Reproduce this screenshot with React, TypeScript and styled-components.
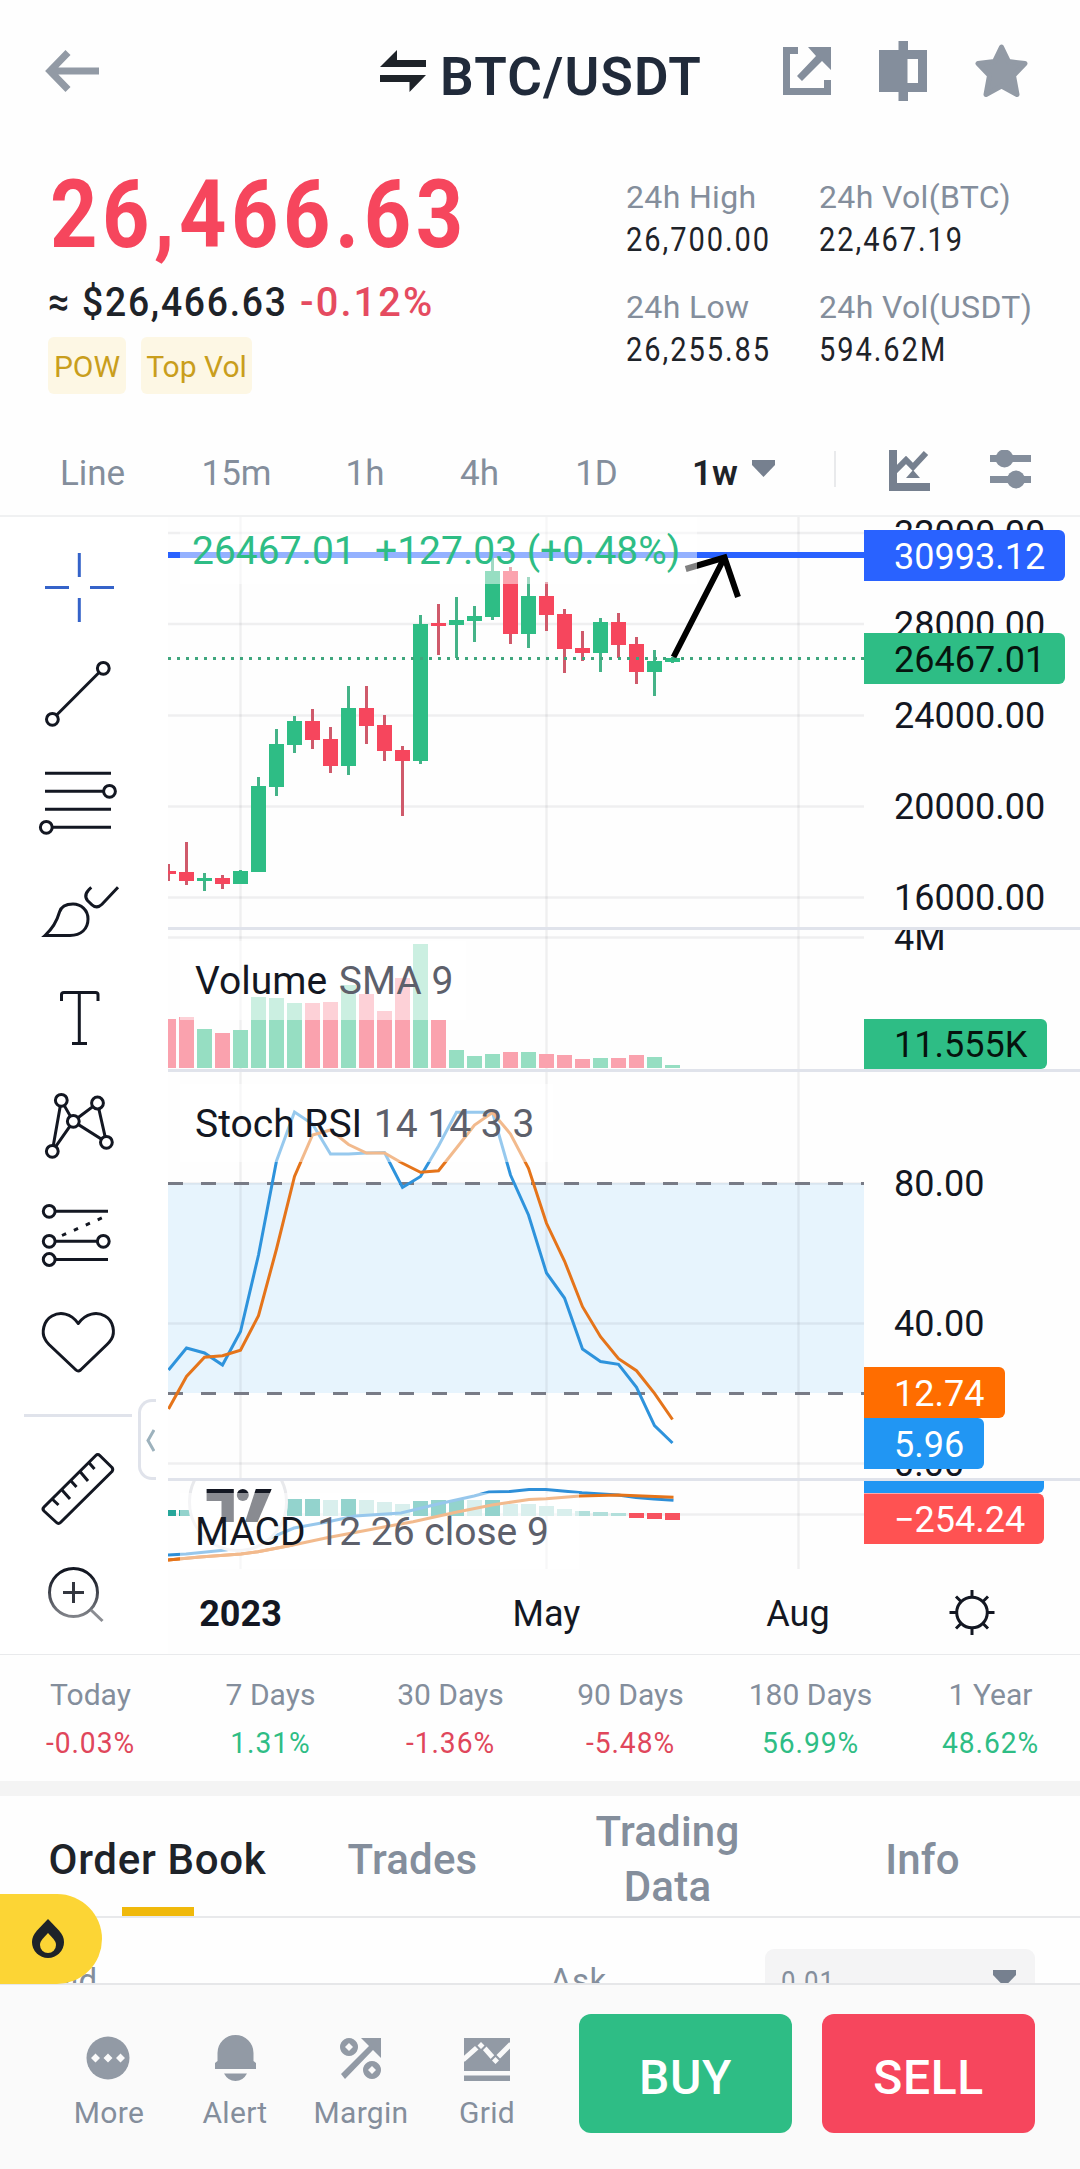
import React from "react";
import styled, { createGlobalStyle, css } from "styled-components";

const GREEN = "#2ebd85";
const RED = "#f6465d";
const GREY = "#848e9c";
const ICON = "#929aa5";
const INK = "#1e2329";
const CHART_INK = "#131722";

const GlobalStyle = createGlobalStyle`
  * { box-sizing: border-box; }
  body { margin: 0; background: #fff; }
`;

const Screen = styled.div`
  width: 1080px;
  height: 2169px;
  overflow: hidden;
  display: flex;
  flex-direction: column;
  background: #fefefe;
  color: ${INK};
  font-family: Roboto, "Liberation Sans", sans-serif;
  white-space: nowrap;
`;

/* ---------- header ---------- */

const Header = styled.header`
  display: flex;
  align-items: flex-start;
  height: 160px;
  padding: 41px 50px 0 45px;
  flex: none;
`;

const BackIcon = styled.svg`
  width: 54px;
  height: 42px;
  margin-top: 9px;
`;

const PairTitle = styled.h1`
  display: flex;
  align-items: flex-start;
  gap: 14px;
  width: 403px;
  margin: 0 0 0 281px;
  font-size: 53px;
  line-height: 62px;
  font-weight: 600;
  letter-spacing: 1.2px;
  color: #202a3a;

  svg {
    width: 46px;
    height: 42px;
    margin-top: 9px;
  }

  span {
    margin-top: 5px;
  }
`;

const HeaderIcons = styled.div`
  display: flex;
  gap: 48px;
  align-items: flex-start;

  svg {
    display: block;
    flex: none;
  }
`;

/* ---------- ticker ---------- */

const Ticker = styled.section`
  display: flex;
  height: 264px;
  flex: none;
`;

const PriceBlock = styled.div`
  width: 580px;
  padding: 9px 0 0 48px;
`;

const Din = styled.span<{ size: number; gap: number; weight?: number; color?: string; squeeze?: number }>`
  display: inline-block;
  font-size: ${(p) => p.size}px;
  font-weight: ${(p) => p.weight ?? 400};
  letter-spacing: ${(p) => p.gap}px;
  color: ${(p) => p.color ?? INK};
  transform: scaleX(${(p) => p.squeeze ?? 0.88});
  transform-origin: left center;
`;

const LastPrice = styled.div`
  height: 92px;
  padding-left: 2px;
  line-height: 92px;
`;

const FiatRow = styled.div`
  display: flex;
  height: 58px;
  margin-top: 12px;
  line-height: 58px;
`;

const FiatPrice = styled.div`
  width: 252px;
`;

const TagRow = styled.div`
  display: flex;
  gap: 15px;
  margin-top: 6px;
`;

const Tag = styled.span<{ w: number }>`
  width: ${(p) => p.w}px;
  height: 57px;
  border-radius: 6px;
  background: #fdf7e4;
  color: #c99e1c;
  font-size: 30px;
  line-height: 60px;
  text-align: center;
`;

const Stats = styled.div`
  display: grid;
  grid-template-columns: 193px 1fr;
  grid-template-rows: 110px 110px;
  flex: 1;
  padding: 16px 0 0 46px;
`;

const StatLabel = styled.div`
  height: 42px;
  line-height: 42px;
  font-size: 32px;
  letter-spacing: 0.35px;
  color: ${GREY};
`;

const StatValue = styled.div`
  height: 43px;
  line-height: 43px;
`;

/* ---------- interval bar ---------- */

const IntervalBar = styled.nav`
  display: grid;
  grid-template-columns: 145px 143px 114px 115px 119px 180px 53px 101px 1fr;
  height: 93px;
  flex: none;
  padding: 26px 0 0 20px;
  border-bottom: 2px solid #f0f1f2;
`;

const Interval = styled.div<{ active?: boolean }>`
  display: flex;
  gap: 14px;
  align-items: flex-start;
  justify-content: ${(p) => (p.active ? "flex-start" : "center")};
  padding-left: ${(p) => (p.active ? 36 : 0)}px;
  height: 46px;
  line-height: 47px;
  font-size: 35px;
  font-weight: ${(p) => (p.active ? 600 : 400)};
  color: ${(p) => (p.active ? INK : GREY)};

  svg {
    margin-top: 10px;
  }
`;

const BarRule = styled.div`
  width: 2px;
  height: 36px;
  background: #e9eaec;
  margin: 1px 0 0 -2px;
`;

/* ---------- chart ---------- */

const ChartSection = styled.section`
  display: flex;
  height: 1137px;
  flex: none;
`;

const Toolbar = styled.aside`
  position: relative;
  width: 168px;
  padding: 16px 0 0 25px;
  background: #fff;
`;

const ToolIcon = styled.svg`
  display: block;
  width: 108px;
  height: 108px;
  overflow: visible;
`;

const ToolRule = styled.div`
  width: 108px;
  height: 3px;
  margin: 17px 0 18px -1px;
  background: #e0e3eb;
`;

const CollapseHandle = styled.div`
  position: absolute;
  left: 138px;
  top: 882px;
  width: 18px;
  height: 81px;
  border: 3px solid #e0e3eb;
  border-right: 0;
  border-radius: 14px 0 0 14px;
  background: #fff;
  overflow: hidden;

  svg {
    display: block;
    margin: 27px 0 0 2px;
  }
`;

const ChartArea = styled.div`
  position: relative;
  width: 912px;
`;

const Canvas = styled.svg`
  display: block;
  width: 912px;
  height: 1137px;
`;

const Legend = styled.div<{ top: number; w: number; h: number; pad?: number; tone?: string }>`
  position: absolute;
  left: 12px;
  top: ${(p) => p.top}px;
  width: ${(p) => p.w}px;
  height: ${(p) => p.h}px;
  padding-left: ${(p) => p.pad ?? 15}px;
  background: rgba(255, 255, 255, 0.5);
  font-size: 39px;
  line-height: ${(p) => p.h + 2}px;
  white-space: pre;
  color: ${(p) => p.tone ?? CHART_INK};
`;

const LegendArgs = styled.span`
  margin-left: 2px;
  color: #5d606b;
`;

/* ---------- performance ---------- */

const Performance = styled.section`
  display: grid;
  grid-template-columns: repeat(6, 180px);
  height: 142px;
  flex: none;
  padding-top: 20px;
  border-top: 1px solid #e9eaec;
  border-bottom: 15px solid #f4f4f4;
  text-align: center;
`;

const PerfCell = styled.div<{ up?: boolean }>`
  height: 100px;
  padding-left: 1px;
  font-size: 30px;
  line-height: 40px;
  color: ${GREY};

  strong {
    display: block;
    margin-top: 8px;
    font-size: 30px;
    font-weight: 400;
    letter-spacing: 1px;
    transform: scaleX(0.94);
    color: ${(p) => (p.up ? GREEN : "#e0465b")};
  }
`;

/* ---------- order book ---------- */

const Tabs = styled.nav`
  display: grid;
  grid-template-columns: repeat(4, 255px);
  height: 122px;
  flex: none;
  padding: 0 30px;
  border-bottom: 2px solid #e8e9eb;
`;

const Tab = styled.div<{ active?: boolean }>`
  position: relative;
  display: flex;
  align-items: center;
  justify-content: center;
  padding-top: 6px;
  text-align: center;
  font-size: 42px;
  line-height: 55px;
  font-weight: 500;
  letter-spacing: ${(p) => (p.active ? 0.7 : 0.2)}px;
  white-space: pre-line;
  color: ${(p) => (p.active ? INK : GREY)};

  ${(p) =>
    p.active &&
    css`
      &::after {
        content: "";
        position: absolute;
        left: 92px;
        bottom: 0;
        width: 72px;
        height: 9px;
        background: #f0b90b;
      }
    `}
`;

const BookHead = styled.div`
  display: flex;
  align-items: flex-start;
  height: 65px;
  flex: none;
  overflow: hidden;
  padding: 32px 45px 0 50px;
  font-size: 33px;
  color: ${GREY};
  line-height: 61px;
`;

const BidLabel = styled.span`
  width: 500px;
`;

const AskLabel = styled.span`
  width: 215px;
  letter-spacing: 0.5px;
`;

const StepSelect = styled.div`
  display: flex;
  justify-content: space-between;
  width: 270px;
  height: 60px;
  margin-top: -1px;
  padding: 0 19px 0 16px;
  border-radius: 9px;
  background: #f4f4f5;
  line-height: 65px;

  svg {
    margin-top: 21px;
  }
`;

const Promo = styled.div`
  position: absolute;
  left: 0;
  top: 1894px;
  width: 102px;
  height: 90px;
  padding: 25px 0 0 32px;
  border-radius: 0 45px 45px 0;
  background: #fcd535;
`;

/* ---------- bottom bar ---------- */

const BottomBar = styled.footer`
  display: flex;
  flex: 1;
  padding: 29px 45px 0 46px;
  border-top: 2px solid #e6e7e9;
  background: #fafafa;
`;

const Action = styled.div`
  display: flex;
  flex-direction: column;
  align-items: center;
  width: 126px;
  padding-top: 21px;
  font-size: 30px;
  line-height: 40px;
  letter-spacing: 0.3px;
  color: ${GREY};

  svg {
    display: block;
    margin-bottom: 12px;
  }
`;

const TradeButton = styled.button<{ tone: string }>`
  width: 213px;
  height: 119px;
  margin-left: 29px;
  padding: 0;
  border: 0;
  border-radius: 12px;
  background: ${(p) => p.tone};
  color: #fff;
  font: 500 48px / 128px Roboto, sans-serif;
  letter-spacing: 0.6px;

  & + & {
    margin-left: 30px;
  }
`;

/* ---------- data ---------- */

// up flag, wick high, wick low, body top, body bottom (pixels on the canvas)
const candles: [number, number, number, number, number][] = [
  [0, 864, 881, 871, 874],
  [0, 842, 885, 872, 881],
  [1, 873, 891, 878, 881],
  [0, 875, 889, 878, 884],
  [1, 870, 884, 871, 884],
  [1, 777, 872, 786, 872],
  [1, 729, 796, 744, 787],
  [1, 716, 753, 721, 745],
  [0, 709, 749, 721, 740],
  [0, 727, 773, 739, 766],
  [1, 686, 775, 708, 766],
  [0, 686, 744, 708, 726],
  [0, 715, 761, 725, 751],
  [0, 746, 816, 750, 761],
  [1, 615, 764, 624, 761],
  [0, 604, 655, 623, 626],
  [1, 597, 658, 620, 625],
  [1, 606, 642, 616, 621],
  [1, 558, 620, 571, 617],
  [0, 567, 644, 571, 634],
  [1, 577, 648, 596, 634],
  [0, 582, 631, 596, 615],
  [0, 609, 673, 614, 649],
  [0, 631, 661, 648, 653],
  [1, 618, 672, 622, 653],
  [0, 613, 658, 622, 645],
  [0, 637, 684, 644, 672],
  [1, 650, 696, 661, 672],
  [1, 657, 663, 658, 662],
];

const volumeTops = [
  1019, 1017, 1029, 1033, 1030, 997, 998, 1003, 1003, 1002, 985, 994, 1011, 978, 944, 1020, 1050, 1056, 1054, 1052,
  1052, 1054, 1055, 1059, 1058, 1058, 1055, 1057, 1065,
];

const kLine = [
  1370, 1348, 1353, 1365, 1331.5, 1255, 1161, 1112, 1124, 1154, 1154, 1153, 1152.5, 1187.5, 1176.5, 1146, 1112.3,
  1112.3, 1112.3, 1175, 1215, 1273, 1298, 1349, 1361.5, 1364.3, 1387.3, 1425.7, 1443,
];

const dLine = [
  1409, 1376.5, 1357.3, 1355.7, 1350.3, 1315.7, 1249, 1176.5, 1135, 1130, 1144.5, 1153, 1153, 1163.3, 1172.3, 1170.7,
  1148, 1125, 1112.5, 1134, 1168.3, 1223.3, 1261, 1306.7, 1336.7, 1358.7, 1370.7, 1393.3, 1419.5,
];

const DARK = "#26a69a";
const PALE = "#b2dfdb";
const DROP = "#f7525f";
const macdBars: [number, number, number, string][] = [
  [0, 1510, 1516, DARK],
  [1, 1510, 1516, DARK],
  [7, 1499, 1516, DARK],
  [8, 1499, 1516, DARK],
  [9, 1500, 1516, PALE],
  [10, 1499, 1516, DARK],
  [11, 1500, 1516, PALE],
  [12, 1502, 1516, PALE],
  [13, 1504, 1516, PALE],
  [14, 1501, 1516, DARK],
  [15, 1500, 1516, DARK],
  [16, 1500, 1516, DARK],
  [17, 1500, 1516, PALE],
  [18, 1500, 1516, DARK],
  [19, 1504, 1516, PALE],
  [20, 1504, 1516, PALE],
  [21, 1506, 1516, PALE],
  [22, 1509, 1516, PALE],
  [23, 1511, 1516, PALE],
  [24, 1512, 1516, PALE],
  [25, 1513, 1516, PALE],
  [26, 1513, 1518, DROP],
  [27, 1513, 1519, DROP],
  [28, 1513, 1520, DROP],
];

const barX = (i: number) => 168.5 + 18 * i;
const toPoints = (ys: number[]) => ys.map((y, i) => `${barX(i)},${y}`).join(" ");

const performance: [string, string][] = [
  ["Today", "-0.03%"],
  ["7 Days", "1.31%"],
  ["30 Days", "-1.36%"],
  ["90 Days", "-5.48%"],
  ["180 Days", "56.99%"],
  ["1 Year", "48.62%"],
];

const stats: [string, string][] = [
  ["24h High", "26,700.00"],
  ["24h Vol(BTC)", "22,467.19"],
  ["24h Low", "26,255.85"],
  ["24h Vol(USDT)", "594.62M"],
];

/* ---------- chart pieces ---------- */

function AxisText({ y, children, fill = CHART_INK }: { y: number; children: string; fill?: string }) {
  return (
    <text x={894} y={y + 12.5} fontSize={36} fill={fill}>
      {children}
    </text>
  );
}

function AxisTag(p: { top: number; bottom: number; right: number; fill: string; ink?: string; label?: string }) {
  const { top, bottom, right, fill } = p;
  return (
    <g>
      <path fill={fill} d={`M864 ${top}H${right - 6}a6 6 0 0 1 6 6V${bottom - 6}a6 6 0 0 1 -6 6H864Z`} />
      {p.label && (
        <AxisText y={(top + bottom) / 2 + 0.5} fill={p.ink ?? "#fff"}>
          {p.label}
        </AxisText>
      )}
    </g>
  );
}

function ChartCanvas() {
  return (
    <Canvas viewBox="168 517 912 1137" fontFamily="Roboto, 'Liberation Sans', sans-serif">
      <defs>
        <clipPath id="plot">
          <rect x="168" y="517" width="696" height="1052" />
        </clipPath>
        <clipPath id="pricePane">
          <rect x="864" y="517" width="216" height="410" />
        </clipPath>
        <clipPath id="volumePane">
          <rect x="864" y="930" width="216" height="139" />
        </clipPath>
        <clipPath id="macdPane">
          <rect x="168" y="1481" width="912" height="88" />
        </clipPath>
      </defs>

      <g clipPath="url(#plot)">
        <rect x="168" y="1183" width="696" height="210" fill="#e7f4fd" />
        <g stroke="#2a2e39" strokeOpacity="0.07" strokeWidth="2.4">
          {[533, 624, 715.5, 806.5, 897.5, 937.5, 1183.5, 1323.5, 1463.5, 1514.5].map((y) => (
            <line key={y} x1="168" x2="864" y1={y} y2={y} />
          ))}
          {[240.5, 546.5, 798.5].map((x) => (
            <line key={x} x1={x} x2={x} y1="517" y2="1569" />
          ))}
        </g>

        {volumeTops.map((top, i) => (
          <rect
            key={i}
            x={barX(i) - 7.5}
            y={top}
            width="15"
            height={1068 - top}
            fill={candles[i][0] ? "#96dec2" : "#faa2ae"}
          />
        ))}

        {candles.map(([up, high, low, top, bottom], i) => (
          <g key={i} fill={up ? GREEN : RED}>
            <rect x={barX(i) - 1.5} y={high} width="3" height={low - high} fill={up ? "#45b388" : "#cf5a6b"} />
            <rect x={barX(i) - 7.5} y={top} width="15" height={bottom - top} />
          </g>
        ))}
        <line x1="168" x2="864" y1="658.5" y2="658.5" stroke="#3fa67d" strokeWidth="3" strokeDasharray="3 6" />
        <line x1="168" x2="864" y1="555" y2="555" stroke="#2962ff" strokeWidth="6" />
        <path d="M673.6 657L724.5 557.5M685.7 569L724.5 557.5L738 597" fill="none" stroke="#000" strokeWidth="6" />

        <g stroke="#787b86" strokeWidth="3" strokeDasharray="15 18">
          <line x1="168" x2="864" y1="1183.5" y2="1183.5" />
          <line x1="168" x2="864" y1="1393.5" y2="1393.5" />
        </g>
        <g fill="none" strokeWidth="3">
          <polyline points={toPoints(kLine)} stroke="#2e93dc" />
          <polyline points={toPoints(dLine)} stroke="#e5741a" />
        </g>
      </g>

      <g clipPath="url(#macdPane)">
        {macdBars.map(([i, top, bottom, fill]) => (
          <rect key={i} x={barX(i) - 7.5} y={top} width="15" height={bottom - top} fill={fill} />
        ))}
        <g fill="none" strokeWidth="3">
          <path
            stroke="#2e8fd8"
            d="M168 1555L186 1554L226 1550L250 1545L275 1536L294 1528L327 1522L355 1516L401 1513L438 1504L474 1496L489 1492L510 1491.5L529 1489.5L546 1489.5L582 1492.7L618 1495L636 1497.5L654 1499L673.5 1500.3"
          />
          <path
            stroke="#e5741a"
            d="M168 1560L200 1557L241 1554L258 1551.7L293 1545L327 1537.7L384 1527L413 1521.7L456 1512.3L492 1505L529 1499.5L546 1498.7L580 1496L618 1495L673.5 1497.3"
          />
        </g>
        <circle cx="238" cy="1502" r="48.5" fill="#fff" stroke="#e8e9ec" strokeWidth="3" />
        <g fill={CHART_INK}>
          <path d="M206.6 1489H233.8V1522H221.5V1501H206.6Z" />
          <circle cx="242.8" cy="1495" r="6" />
          <path d="M255.8 1489H271.7L257.6 1522H245Z" />
        </g>
        <path d="M168 1560L200 1557L241 1554L258 1551.7L293 1545" fill="none" stroke="#e5741a" strokeWidth="3" />
      </g>

      <g clipPath="url(#pricePane)">
        <AxisText y={533}>32000.00</AxisText>
        <AxisText y={624}>28000.00</AxisText>
        <AxisText y={715.5}>24000.00</AxisText>
        <AxisText y={806.5}>20000.00</AxisText>
        <AxisText y={897.5}>16000.00</AxisText>
        <AxisTag top={530} bottom={581} right={1065} fill="#2962ff" label="30993.12" />
        <AxisTag top={633} bottom={684} right={1065} fill={GREEN} ink="#06140e" label="26467.01" />
      </g>
      <g clipPath="url(#volumePane)">
        <AxisText y={937.5}>4M</AxisText>
        <AxisTag top={1019} bottom={1069} right={1047} fill={GREEN} ink="#06140e" label="11.555K" />
      </g>
      <AxisText y={1183.5}>80.00</AxisText>
      <AxisText y={1323.5}>40.00</AxisText>
      <AxisText y={1463.5}>0.00</AxisText>
      <AxisTag top={1367} bottom={1418} right={1005} fill="#ff6d00" label="12.74" />
      <AxisTag top={1418} bottom={1469} right={984} fill="#2196f3" label="5.96" />
      <g clipPath="url(#macdPane)">
        <AxisTag top={1443} bottom={1493} right={1044} fill="#2196f3" />
        <AxisTag top={1493.5} bottom={1544} right={1044} fill="#ff5252" label="−254.24" />
      </g>

      <g fill="#e0e3eb">
        <rect x="168" y="927" width="912" height="3" />
        <rect x="168" y="1069" width="912" height="3" />
        <rect x="168" y="1478" width="912" height="3" />
      </g>

      <g fontSize="36" fill={CHART_INK} textAnchor="middle">
        <text x="240.5" y="1626" fontWeight="700">
          2023
        </text>
        <text x="546.5" y="1626">
          May
        </text>
        <text x="798" y="1626">
          Aug
        </text>
      </g>
      <g stroke={CHART_INK} strokeWidth="3" fill="none">
        <circle cx="972" cy="1612.5" r="15.3" />
        <path d="M972 1597V1590M972 1628V1635M956.5 1612.5H949.5M987.5 1612.5H994.5M961 1601.5L956 1596.5M983 1601.5L988 1596.5M961 1623.5L956 1628.5M983 1623.5L988 1628.5" />
      </g>
    </Canvas>
  );
}

/* ---------- drawing tools ---------- */

const dot = (cx: number, cy: number) => <circle key={`${cx}-${cy}`} cx={cx} cy={cy} r="5.9" fill="#fff" />;

const tools: React.ReactNode[] = [
  <path stroke="#3563c9" d="M45 587.5H69M90 587.5H114M79.3 553V577M79.3 598V622" />,
  <>
    <path d="M52.4 719.3L103.3 668.3" />
    {dot(52.4, 719.3)}
    {dot(103.3, 668.3)}
  </>,
  <>
    <path d="M45 773.3H111M45 791.3H109M45 809.3H111M46 827.3H111" />
    {dot(109.5, 791.3)}
    {dot(46.3, 827.3)}
  </>,
  <>
    <path d="M45 935.5H70C81 935.5 88 929 88 919C88 910 81 904 73 904C66 904 61 907 59.5 912C57 921 51 930 45 935.5Z" />
    <path d="M91.3 887.3C85.5 892 84 896 87.5 900.5L92 904.8C95.5 907.8 99 907.3 102 904.3L118 887.3" />
  </>,
  <path d="M61.5 1001V994.5Q61.5 992.5 64 992.5H95.5Q98 992.5 98 994.5V1001M79.3 992.5V1043.5M72 1043.5H87" />,
  <>
    <path d="M61.3 1100.3L52.3 1151.3L73.3 1121.3ZM73.3 1121.3L97.5 1103L106.4 1142.3Z" />
    {dot(61.3, 1100.3)}
    {dot(97.5, 1103)}
    {dot(73.3, 1121.3)}
    {dot(106.4, 1142.3)}
    {dot(52.3, 1151.3)}
  </>,
  <>
    <path d="M49 1211.3H108M49 1241.3H103M49 1259.5H108" />
    <path d="M62 1235.5L104 1217" strokeDasharray="4.5 8.5" />
    {dot(49.2, 1211.3)}
    {dot(49.2, 1241.3)}
    {dot(103.3, 1241.3)}
    {dot(49.2, 1259.5)}
  </>,
  <path
    strokeLinejoin="round"
    d="M78.2 1323.5C71 1313 60 1311.5 52 1316C43 1321 41.5 1333 45 1339Q46 1341.5 49 1344.5L76 1370Q78.2 1372 80.5 1370L107 1344.5Q110 1341.5 111.5 1339C115 1333 114 1321 105 1316C97 1311.5 86 1313 78.2 1323.5Z"
  />,
];

function ToolColumn() {
  return (
    <Toolbar>
      {tools.map((shape, i) => (
        <ToolIcon
          key={i}
          viewBox={`25 ${533 + 108 * i} 108 108`}
          fill="none"
          stroke={CHART_INK}
          strokeWidth="3"
        >
          {shape}
        </ToolIcon>
      ))}
      <ToolRule />
      <ToolIcon viewBox="25 1435 108 108" fill="none" stroke={CHART_INK} strokeWidth="3" strokeLinejoin="round">
        <path d="M95.8 1455.5Q97.8 1453.5 99.8 1455.5L112 1467.5Q113.5 1469.5 112 1471.5L60.5 1522.5Q58.5 1524.5 56.5 1522.5L44 1511Q42 1509 44 1507Z" />
        <path d="M88.8 1462.5L94.5 1469M80 1471.5L88 1481M70.6 1480.5L76.5 1487M62 1490L70 1499M52.7 1499.5L58.5 1505" />
      </ToolIcon>
      <ToolIcon viewBox="25 1543 108 108" fill="none" strokeWidth="3">
        <defs>
          <linearGradient id="fade" gradientUnits="userSpaceOnUse" x1="0" x2="0" y1="1575" y2="1625">
            <stop offset="0" stopColor={CHART_INK} />
            <stop offset="1" stopColor="#97999e" />
          </linearGradient>
        </defs>
        <circle cx="73.5" cy="1592.5" r="24" stroke="url(#fade)" />
        <path d="M63 1592.5H84M73.5 1582V1603" stroke="#33363f" />
        <path d="M91 1610L102.5 1621" stroke="#8b8d93" />
      </ToolIcon>
      <CollapseHandle>
        <svg width="12" height="23" viewBox="0 0 12 23" fill="none" stroke="#9db2bd" strokeWidth="3">
          <path d="M11 1L5 11.5L11 22" />
        </svg>
      </CollapseHandle>
    </Toolbar>
  );
}

const Caret = () => (
  <svg width="23" height="17" viewBox="0 0 23 17" fill="#76808f">
    <path d="M0 0H23V5L11.5 17L0 5Z" />
  </svg>
);

/* ---------- page ---------- */

export default function App() {
  return (
    <Screen>
      <GlobalStyle />
      <Header>
        <BackIcon viewBox="0 0 54 42" fill="none" stroke={ICON} strokeWidth="7">
          <path d="M54 21H6M23 2.5L5 21L23 39.5" />
        </BackIcon>
        <PairTitle>
          <svg viewBox="0 0 46 42" fill={INK}>
            <path d="M17 0V10H46V17H0ZM0 25H46L29.5 42V32H0Z" />
          </svg>
          <span>BTC/USDT</span>
        </PairTitle>
        <HeaderIcons>
          <svg width="48" height="60" viewBox="0 0 48 60" fill={GREY}>
            <path d="M0 6H15V13H7V47H41V39H48V54H0Z" />
            <path d="M25 6H48V29L39 20L19 40L14 35L33 15Z" />
          </svg>
          <svg width="48" height="60" viewBox="0 0 48 60" fill={GREY}>
            <path fillRule="evenodd" d="M19.5 0H29V9H48V51H29V60H19.5V51H0V9H19.5ZM28.5 18V42H39V18Z" />
          </svg>
          <svg
            width="54"
            height="60"
            viewBox="0 0 54 60"
            fill={ICON}
            stroke={ICON}
            strokeWidth="5"
            strokeLinejoin="round"
          >
            <path d="M26.5 6L33.5 20.5L50 22.5L38.5 34.5L42 53.5L26.5 45L11 53.5L14.5 34.5L3 22.5L19.5 20.5Z" />
          </svg>
        </HeaderIcons>
      </Header>

      <Ticker>
        <PriceBlock>
          <LastPrice>
            <Din size={94} gap={5.2} weight={700} color={RED}>
              26,466.63
            </Din>
          </LastPrice>
          <FiatRow>
            <FiatPrice>
              <Din size={41} gap={1.9} weight={500} squeeze={0.91}>
                ≈ $26,466.63
              </Din>
            </FiatPrice>
            <Din size={41} gap={2.2} weight={500} squeeze={0.97} color="#e54b60">
              -0.12%
            </Din>
          </FiatRow>
          <TagRow>
            <Tag w={78}>POW</Tag>
            <Tag w={111}>Top Vol</Tag>
          </TagRow>
        </PriceBlock>
        <Stats>
          {stats.map(([label, value]) => (
            <div key={label}>
              <StatLabel>{label}</StatLabel>
              <StatValue>
                <Din size={33} gap={2.2}>
                  {value}
                </Din>
              </StatValue>
            </div>
          ))}
        </Stats>
      </Ticker>

      <IntervalBar>
        <Interval>Line</Interval>
        <Interval>15m</Interval>
        <Interval>1h</Interval>
        <Interval>4h</Interval>
        <Interval>1D</Interval>
        <Interval active>
          1w
          <Caret />
        </Interval>
        <BarRule />
        <svg width="41" height="41" viewBox="0 0 41 41" fill="#76808f">
          <path d="M0 0H8V33H41V41H0Z" />
          <path d="M6 21L17 10L24 17L37 3" fill="none" stroke="#76808f" strokeWidth="6" />
          <path d="M24 20L31 28H17Z" />
        </svg>
        <svg width="41" height="41" viewBox="0 0 41 41" fill={GREY}>
          <path d="M0 5H41V12H0ZM0 26H41V33H0Z" />
          <circle cx="14.5" cy="8.5" r="9" />
          <circle cx="26" cy="29.5" r="9" />
        </svg>
      </IntervalBar>

      <ChartSection>
        <ToolColumn />
        <ChartArea>
          <ChartCanvas />
          <Legend top={0} w={517} h={67} pad={12} tone={GREEN}>
            {"26467.01  +127.03 (+0.48%)"}
          </Legend>
          <Legend top={424} w={286} h={79}>
            Volume <LegendArgs>SMA 9</LegendArgs>
          </Legend>
          <Legend top={567} w={373} h={78}>
            Stoch RSI <LegendArgs>14 14 3 3</LegendArgs>
          </Legend>
          <Legend top={976} w={399} h={76}>
            MACD <LegendArgs>12 26 close 9</LegendArgs>
          </Legend>
        </ChartArea>
      </ChartSection>

      <Performance>
        {performance.map(([label, change]) => (
          <PerfCell key={label} up={!change.startsWith("-")}>
            {label}
            <strong>{change}</strong>
          </PerfCell>
        ))}
      </Performance>

      <Tabs>
        <Tab active>Order Book</Tab>
        <Tab>Trades</Tab>
        <Tab>{"Trading\nData"}</Tab>
        <Tab>Info</Tab>
      </Tabs>

      <BookHead>
        <BidLabel>Bid</BidLabel>
        <AskLabel>Ask</AskLabel>
        <StepSelect>
          <Din size={30} gap={1} squeeze={0.86} color={GREY}>
            0.01
          </Din>
          <Caret />
        </StepSelect>
      </BookHead>

      <BottomBar>
        <Action>
          <svg width="46" height="46" viewBox="0 0 46 46" fill={ICON}>
            <circle cx="22" cy="23" r="21.5" />
            <path
              fill="#fafafa"
              d="M9.5 18.5L14 23L9.5 27.5L5 23ZM22 18.5L26.5 23L22 27.5L17.5 23ZM34.5 18.5L39 23L34.5 27.5L30 23Z"
            />
          </svg>
          More
        </Action>
        <Action>
          <svg width="41" height="46" viewBox="0 0 41 46" fill={ICON}>
            <path d="M2.5 26V18A18 18 0 0 1 38.5 18V26L41 28V34H0V28ZM9 38.5H32Q28 46 20.5 46T9 38.5Z" />
          </svg>
          Alert
        </Action>
        <Action>
          <svg width="42" height="46" viewBox="0 0 42 46" fill={ICON}>
            <path
              fillRule="evenodd"
              d="M9 3A9 9 0 1 0 9.01 3ZM9 8L13 12L9 16L5 12ZM32 26A9 9 0 1 0 32.01 26ZM32 31L36 35L32 39L28 35ZM21 3H41V23L33 15L5 44L1 39L29 11Z"
            />
          </svg>
          Margin
        </Action>
        <Action>
          <svg width="46" height="46" viewBox="0 0 46 46" fill={ICON}>
            <path d="M0 3H46V36H0ZM0 40.5H46V46H0Z" />
            <path d="M-1 25L17 9L31 25L47 9" fill="none" stroke="#fafafa" strokeWidth="5" />
            <path d="M17 4L23.5 10.5L17 17L10.5 10.5ZM31.5 19L38 25.5L31.5 32L25 25.5Z" />
            <path d="M17 7L20.5 10.5L17 14L13.5 10.5ZM31.5 22L35 25.5L31.5 29L28 25.5Z" fill="#fafafa" />
          </svg>
          Grid
        </Action>
        <TradeButton tone={GREEN}>BUY</TradeButton>
        <TradeButton tone={RED}>SELL</TradeButton>
      </BottomBar>

      <Promo>
        <svg width="32" height="39" viewBox="0 0 32 39">
          <path d="M16 0L27 11.5C30.5 15.5 32 19 32 23A16 16 0 0 1 0 23C0 19 1.5 15.5 5 11.5Z" fill={INK} />
          <path d="M16 14L21.5 20C23.3 22.3 24 24 24 26A8 8 0 0 1 8 26C8 24 8.7 22.3 10.5 20Z" fill="#fcd535" />
        </svg>
      </Promo>
    </Screen>
  );
}
